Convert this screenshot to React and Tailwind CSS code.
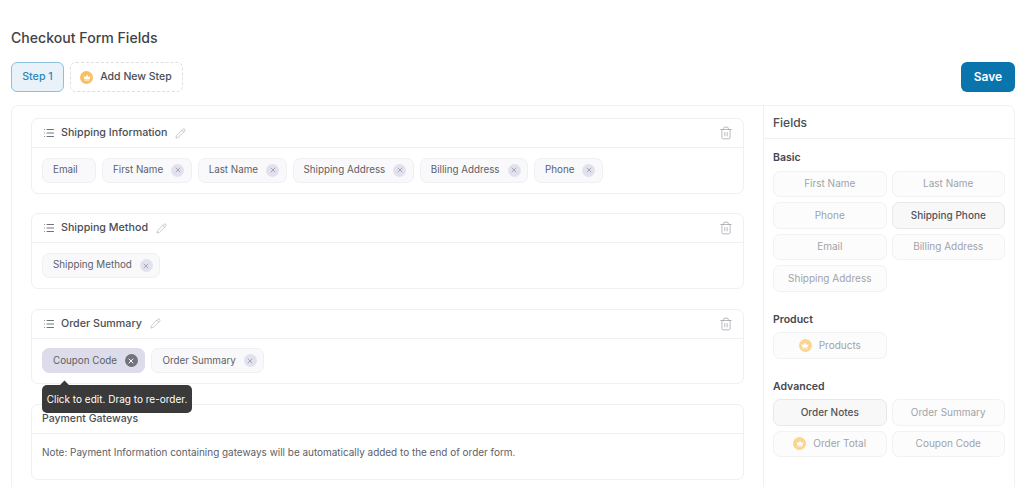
import React from "react";
import { List, Pencil, Trash2, X } from "lucide-react";

const Crown = ({ muted }) => (
  <span className={`flex h-[13px] w-[13px] shrink-0 items-center justify-center rounded-full ${muted ? "bg-[#fbd48f]" : "bg-[#fbbf5d]"}`}>
    <svg width="8" height="7" viewBox="0 0 8 7" fill="#fff">
      <path d="M0.5 1.8 L2.4 3.2 L4 0.6 L5.6 3.2 L7.5 1.8 L6.7 5 H1.3 Z" />
      <rect x="1.5" y="5.5" width="5" height="1" />
    </svg>
  </span>
);

const Chip = ({ label, removable = true, active, w }) => (
  <div className={`flex h-[25px] items-center rounded-[7px] border pl-[10px] pr-[6.5px] text-[9.8px] text-[#5c6068] ${active ? "border-[#dcdcea] bg-[#dcdcea]" : "border-[#f0f0f3] bg-[#f9f9fb]"} ${w || ""}`}>
    <span className="whitespace-nowrap">{label}</span>
    {removable && (
      <span className={`ml-[8px] flex h-[13px] w-[13px] items-center justify-center rounded-full ${active ? "bg-[#72737d] text-white" : "bg-[#e2e2ef] text-[#7b7d88]"}`}>
        <X size={8} strokeWidth={active ? 3 : 1.8} />
      </span>
    )}
  </div>
);

const Card = ({ title, children }) => (
  <section className="rounded-[7px] border border-[#eef0f3] bg-white">
    <header className="flex h-[29px] items-center border-b border-[#eef0f3] pl-[11px] pr-[10px]">
      <List size={12} strokeWidth={1.6} className="text-[#4b5058]" />
      <h3 className="ml-[6px] text-[10.7px] font-medium text-[#4a4e55]">{title}</h3>
      <Pencil size={11} strokeWidth={1.2} className="ml-[8px] text-[#9ca0a7]" />
      <Trash2 size={14} strokeWidth={1.2} className="ml-auto text-[#9a9ea5]" />
    </header>
    <div className="flex h-[44.5px] items-center gap-[6px] px-[10px]">{children}</div>
  </section>
);

const Field = ({ label, on, crown }) => (
  <div className={`flex h-[26.5px] items-center justify-center gap-[7px] rounded-[7px] border text-[10px] ${on ? "border-[#e8e8ec] bg-[#f8f8f9] font-medium text-[#50545b]" : "border-[#f2f2f4] bg-[#fcfcfc] text-[#a0a3a9]"}`}>
    {crown && <Crown muted />}
    <span>{label}</span>
  </div>
);

const Group = ({ title, children, className }) => (
  <div className={className}>
    <h4 className="mb-[6.5px] h-[12px] text-[10.5px] font-semibold leading-[12px] text-[#44474d]">{title}</h4>
    <div className="grid grid-cols-2 gap-x-[5px] gap-y-[5px]">{children}</div>
  </div>
);

export default function App() {
  return (
    <div className="h-[487px] overflow-hidden bg-white pl-[11px] pr-[9px] font-['Inter',sans-serif]">
      <h1 className="pt-[29px] text-[14.1px] font-medium leading-[18px] text-[#3f4248]">Checkout Form Fields</h1>
      <div className="mt-[15px] flex items-center gap-[6px]">
        <button className="flex h-[30px] w-[53px] items-center justify-center rounded-[6px] border border-[#8cc0e0] bg-[#e9f2f8] text-[10.7px] font-medium text-[#2a86bc]">Step 1</button>
        <button className="flex h-[30px] w-[113px] items-center justify-center gap-[7px] rounded-[6px] border border-dashed border-[#dfdfe3] bg-white pr-[1px] text-[10.5px] font-medium text-[#4a4e55]">
          <Crown />
          Add New Step
        </button>
        <button className="ml-auto h-[30px] w-[54px] rounded-[6px] bg-[#0a75ad] text-[12px] font-semibold text-white">Save</button>
      </div>
      <div className="mt-[13px] flex h-[420px] rounded-[7px] border border-[#f0f1f3]">
        <div className="relative w-[752px] shrink-0 border-r border-[#eef0f3] pl-[19px] pr-[19px] pt-[12px]">
          <div className="flex flex-col gap-[19.8px]">
            <Card title="Shipping Information">
              <Chip label="Email" removable={false} w="w-[54px]" />
              <Chip label="First Name" />
              <Chip label="Last Name" />
              <Chip label="Shipping Address" />
              <Chip label="Billing Address" />
              <Chip label="Phone" />
            </Card>
            <Card title="Shipping Method">
              <Chip label="Shipping Method" />
            </Card>
            <Card title="Order Summary">
              <Chip label="Coupon Code" active />
              <Chip label="Order Summary" />
            </Card>
            <section className="rounded-[7px] border border-[#eef0f3] bg-white">
              <header className="flex h-[29.5px] items-center border-b border-[#eef0f3] px-[10px] text-[10.5px] font-medium text-[#4a4e55]">Payment Gateways</header>
              <p className="flex h-[44.5px] items-center px-[10px] pb-[8px] text-[9.95px] text-[#5c6068]">Note: Payment Information containing gateways will be automatically added to the end of order form.</p>
            </section>
          </div>
          <div className="absolute left-[30px] top-[279px] flex h-[28px] w-[150px] items-center justify-center rounded-[5px] bg-[#3a3a3a] text-[10px] whitespace-nowrap text-white">
            <span className="absolute -top-[3px] left-[19px] h-[7px] w-[7px] rotate-45 bg-[#3a3a3a]" />
            Click to edit. Drag to re-order.
          </div>
        </div>
        <aside className="flex-1">
          <h2 className="flex h-[33px] items-center border-b border-[#eef0f3] pl-[9px] pt-[2px] text-[12px] font-medium text-[#4a4e55]">Fields</h2>
          <div className="pl-[9px] pr-[9px] pt-[13px]">
            <Group title="Basic">
              <Field label="First Name" />
              <Field label="Last Name" />
              <Field label="Phone" />
              <Field label="Shipping Phone" on />
              <Field label="Email" />
              <Field label="Billing Address" />
              <Field label="Shipping Address" />
            </Group>
            <Group title="Product" className="mt-[22px]">
              <Field label="Products" crown />
            </Group>
            <Group title="Advanced" className="mt-[22px]">
              <Field label="Order Notes" on />
              <Field label="Order Summary" />
              <Field label="Order Total" crown />
              <Field label="Coupon Code" />
            </Group>
          </div>
        </aside>
      </div>
    </div>
  );
}
